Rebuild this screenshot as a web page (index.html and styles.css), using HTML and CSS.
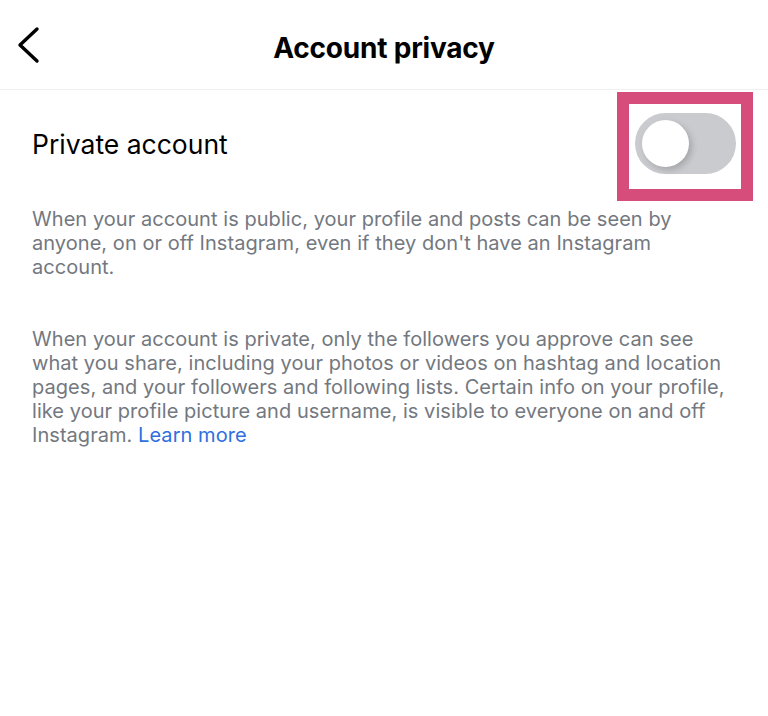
FILE: index.html
```html
<!DOCTYPE html>
<html lang="en">
<head>
<meta charset="utf-8">
<title>Account privacy</title>
<link rel="stylesheet" href="styles.css">
</head>
<body>
<div class="screen">
  <header class="topbar">
    <button class="back" aria-label="Back">
      <svg width="24" height="38" viewBox="0 0 24 38" fill="none">
        <path d="M21 3 L4 19 L21 35" stroke="#000" stroke-width="3.4" stroke-linecap="round" stroke-linejoin="round"/>
      </svg>
    </button>
    <h1 class="title">Account privacy</h1>
  </header>

  <section class="setting">
    <span class="label">Private account</span>
    <div class="highlight">
      <div class="toggle"><span class="knob"></span></div>
    </div>
  </section>

  <p class="desc">When your account is public, your profile and posts can be seen by<br>anyone, on or off Instagram, even if they don't have an Instagram<br>account.</p>

  <p class="desc second">When your account is private, only the followers you approve can see<br>what you share, including your photos or videos on hashtag and location<br>pages, and your followers and following lists. Certain info on your profile,<br>like your profile picture and username, is visible to everyone on and off<br>Instagram. <a class="link" href="#">Learn more</a></p>
</div>
</body>
</html>
```
FILE: styles.css
```css
* { box-sizing: border-box; }
html, body { margin: 0; padding: 0; background: #fff; }
body {
  font-family: Inter, "Noto Sans", "Liberation Sans", sans-serif;
  color: #000;
}
.screen { width: 768px; min-height: 716px; }

.topbar {
  height: 90px;
  border-bottom: 1px solid #efefef;
  display: flex;
  align-items: center;
  justify-content: center;
  position: relative;
}
.back {
  position: absolute;
  left: 16px;
  top: 26px;
  padding: 0;
  border: 0;
  background: none;
  display: block;
}
.back svg { display: block; }
.title {
  margin: 0;
  font-size: 28px;
  font-weight: 700;
  letter-spacing: -0.2px;
  line-height: 1;
  padding-top: 6px;
}

.setting {
  display: flex;
  justify-content: space-between;
  align-items: flex-start;
  padding: 2px 15px 0 32px;
}
.label {
  margin-top: 37px;
  font-size: 26.5px;
  line-height: 30px;
  font-weight: 400;
}
.highlight {
  border: 12px solid #d64d7c;
  padding: 9px 5px 15px 6px;
  background: #fff;
}
.toggle {
  width: 101px;
  height: 61px;
  border-radius: 31px;
  background: #c9cbcf;
  position: relative;
}
.knob {
  position: absolute;
  left: 7px;
  top: 7px;
  width: 47px;
  height: 47px;
  border-radius: 50%;
  background: #fff;
  box-shadow: 3px 3px 6px rgba(0,0,0,0.18);
}

.desc {
  margin: 7px 0 0;
  padding: 0 20px 0 32px;
  font-size: 20px;
  line-height: 23.8px;
  color: #737880;
  letter-spacing: 0.05px;
  white-space: nowrap;
}
.desc.second { margin-top: 49px; }
.link { color: #2f6fde; text-decoration: none; }
```
